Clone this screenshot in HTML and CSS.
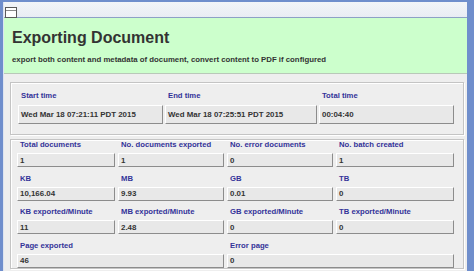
FILE: index.html
```html
<!DOCTYPE html>
<html>
<head>
<meta charset="utf-8">
<link rel="stylesheet" href="styles.css">
</head>
<body>
<div class="window">
  <div class="frame">
    <div class="titlebar">
      <svg class="ticon" width="12" height="11" viewBox="0 0 12 11">
        <rect x="0.5" y="0.5" width="11" height="10" fill="#ffffff" stroke="#5a5a5a"/>
        <line x1="1" y1="3.5" x2="11" y2="3.5" stroke="#8a8a8a"/>
      </svg>
    </div>
    <div class="header">
      <h1 class="title">Exporting Document</h1>
      <p class="subtitle">export both content and metadata of document, convert content to PDF if configured</p>
    </div>
    <div class="content">
      <div class="group g1">
        <div class="cell"><div class="label">Start time</div><div class="field">Wed Mar 18 07:21:11 PDT 2015</div></div>
        <div class="cell"><div class="label">End time</div><div class="field">Wed Mar 18 07:25:51 PDT 2015</div></div>
        <div class="cell"><div class="label">Total time</div><div class="field">00:04:40</div></div>
      </div>
      <div class="group g2">
        <div class="cell"><div class="label">Total documents</div><div class="field">1</div></div>
        <div class="cell"><div class="label">No. documents exported</div><div class="field">1</div></div>
        <div class="cell"><div class="label">No. error documents</div><div class="field">0</div></div>
        <div class="cell"><div class="label">No. batch created</div><div class="field">1</div></div>

        <div class="cell"><div class="label">KB</div><div class="field">10,166.04</div></div>
        <div class="cell"><div class="label">MB</div><div class="field">9.93</div></div>
        <div class="cell"><div class="label">GB</div><div class="field">0.01</div></div>
        <div class="cell"><div class="label">TB</div><div class="field">0</div></div>

        <div class="cell"><div class="label">KB exported/Minute</div><div class="field">11</div></div>
        <div class="cell"><div class="label">MB exported/Minute</div><div class="field">2.48</div></div>
        <div class="cell"><div class="label">GB exported/Minute</div><div class="field">0</div></div>
        <div class="cell"><div class="label">TB exported/Minute</div><div class="field">0</div></div>

        <div class="cell span2"><div class="label">Page exported</div><div class="field">46</div></div>
        <div class="cell span2"><div class="label">Error page</div><div class="field">0</div></div>
      </div>
    </div>
  </div>
</div>
</body>
</html>
```

FILE: styles.css
```css
html, body {
  margin: 0;
  padding: 0;
}
body {
  width: 474px;
  height: 271px;
  overflow: hidden;
  font-family: "Liberation Sans", Arial, sans-serif;
}
.window {
  box-sizing: border-box;
  height: 271px;
  background: #6f8ecc;
  padding: 2px 7px 0 3px;
}
.frame {
  height: 100%;
  background: #eeeeee;
  border-left: 1px solid #dde4f0;
  display: flex;
  flex-direction: column;
  overflow: hidden;
}
.titlebar {
  height: 16px;
  flex: none;
  box-sizing: border-box;
  padding: 5px 0 0 1px;
  border-bottom: 1px solid #8da1c6;
  background-image:
    radial-gradient(circle, rgba(255,255,255,0.85) 0.6px, rgba(255,255,255,0) 0.9px),
    linear-gradient(#e3e8f1, #cfd8e7);
  background-size: 2px 2px, 100% 100%;
}
.ticon {
  display: block;
}
.header {
  flex: none;
  background: #ccffcc;
  padding: 10px 0 8px 8px;
  border-bottom: 1px solid #b8c8b8;
}
.title {
  margin: 0;
  font-size: 16px;
  line-height: 19px;
  font-weight: bold;
  color: #333333;
}
.subtitle {
  margin: 8px 0 0 0;
  font-size: 7.8px;
  line-height: 10px;
  font-weight: bold;
  color: #333333;
  white-space: nowrap;
}
.content {
  flex: 1;
  padding: 8px 3px 0 6px;
}
.group {
  display: grid;
  border: 1px solid #c4c4c4;
  box-shadow: inset 1px 1px 0 #ffffff, 1px 1px 0 #ffffff;
}
.g1 {
  grid-template-columns: 145px 152px 135px;
  column-gap: 2px;
  padding: 8px 0 10px 7px;
}
.g2 {
  margin-top: 4px;
  grid-template-columns: 98px 106px 106px 118px;
  column-gap: 3px;
  row-gap: 6.5px;
  padding: 0 0 0 6px;
}
.span2 {
  grid-column: span 2;
}
.label {
  font-size: 7.7px;
  line-height: 10px;
  font-weight: bold;
  color: #333399;
  padding-left: 3px;
  white-space: nowrap;
}
.g1 .label {
  margin-bottom: 4px;
}
.g2 .label {
  margin-bottom: 3px;
}
.field {
  box-sizing: border-box;
  display: flex;
  align-items: center;
  background: #e8e8e8;
  border: 1px solid;
  border-color: #ffffff #8c8c8c #8c8c8c #ffffff;
  padding-left: 2px;
  font-size: 7.9px;
  font-weight: bold;
  color: #333333;
  white-space: nowrap;
  overflow: hidden;
}
.g1 .field {
  height: 19px;
}
.g2 .field {
  height: 14px;
}
```
